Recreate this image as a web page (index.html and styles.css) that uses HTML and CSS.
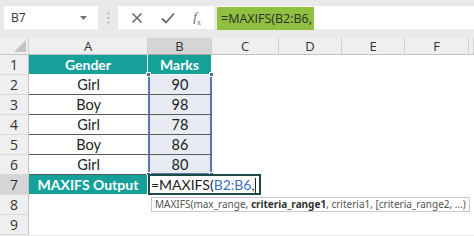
FILE: index.html
```html
<!DOCTYPE html>
<html lang="en">
<head>
    <meta charset="UTF-8">
    <title>MAXIFS</title>
    <link rel="stylesheet" href="styles.css">
</head>
<body>
    <div class="toolbar">
        <div class="name-box">
            <span>B7</span>
            <svg class="caret" width="7" height="4" viewBox="0 0 7 4"><path d="M0 0h7L3.5 4z" fill="#707070"/></svg>
        </div>
        <div class="grip">
            <svg width="3" height="12" viewBox="0 0 3 12"><circle cx="1.5" cy="1.5" r="1" fill="#a8a8a8"/><circle cx="1.5" cy="6" r="1" fill="#a8a8a8"/><circle cx="1.5" cy="10.5" r="1" fill="#a8a8a8"/></svg>
        </div>
        <div class="fx-buttons">
            <svg width="12" height="12" viewBox="0 0 12 12"><path d="M1.5 1.5l9 9M10.5 1.5l-9 9" stroke="#6a6a6a" stroke-width="1.6"/></svg>
            <svg width="14" height="12" viewBox="0 0 14 12"><path d="M1 6.5l4 4L13 1.5" stroke="#6a6a6a" stroke-width="1.8" fill="none"/></svg>
            <span class="fx"><i>f</i><sub>x</sub></span>
        </div>
        <div class="formula">
            <span class="formula-text">=MAXIFS(B2:B6,</span>
        </div>
    </div>

    <div class="sheet">
        <div class="corner"><span class="tri"></span></div>
        <div class="col-head">A</div>
        <div class="col-head active">B</div>
        <div class="col-head">C</div>
        <div class="col-head">D</div>
        <div class="col-head">E</div>
        <div class="col-head">F</div>
        <div class="col-head"></div>

        <div class="row-head">1</div>
        <div class="cell title">Gender</div>
        <div class="cell title">Marks</div>
        <div class="blank"></div>

        <div class="row-head">2</div>
        <div class="cell">Girl</div>
        <div class="cell sel first">90<span class="handle tl"></span><span class="handle tr"></span></div>
        <div class="blank"></div>

        <div class="row-head">3</div>
        <div class="cell">Boy</div>
        <div class="cell sel">98</div>
        <div class="blank"></div>

        <div class="row-head">4</div>
        <div class="cell">Girl</div>
        <div class="cell sel">78</div>
        <div class="blank"></div>

        <div class="row-head">5</div>
        <div class="cell">Boy</div>
        <div class="cell sel">86</div>
        <div class="blank"></div>

        <div class="row-head">6</div>
        <div class="cell">Girl</div>
        <div class="cell sel last">80<span class="handle bl"></span><span class="handle br"></span></div>
        <div class="blank"></div>

        <div class="row-head active">7</div>
        <div class="cell title">MAXIFS Output</div>
        <div class="cell edit-host">
            <div class="editor">=MAXIFS(<span class="ref">B2:B6</span>,<span class="cursor"></span></div>
            <div class="tip">MAXIFS(max_range, <b>criteria_range1</b>, criteria1, [criteria_range2, ...)</div>
        </div>
        <div class="blank"></div>

        <div class="row-head">8</div>
        <div class="blank wide"></div>

        <div class="row-head">9</div>
        <div class="blank wide"></div>
    </div>
</body>
</html>
```

FILE: styles.css
```css
* {
    margin: 0;
    padding: 0;
    box-sizing: border-box;
}

body {
    width: 474px;
    height: 236px;
    overflow: hidden;
    background: #e9e9e9;
    font-family: "Open Sans", "Noto Sans", sans-serif;
    color: #222;
}

.toolbar {
    display: flex;
    align-items: center;
    height: 38px;
    padding: 0 0 3px 4px;
}

.name-box {
    display: flex;
    align-items: center;
    justify-content: space-between;
    width: 94px;
    height: 23px;
    background: #fff;
    padding: 0 11px 0 7px;
    font-size: 12px;
    color: #333;
}

.grip {
    width: 20px;
    display: flex;
    justify-content: center;
}

.fx-buttons {
    display: flex;
    align-items: center;
    justify-content: space-around;
    width: 96px;
    height: 23px;
    background: #fff;
    padding: 0 4px;
}

.fx {
    font-family: "Liberation Serif", serif;
    font-size: 13px;
    color: #6a6a6a;
}

.fx sub {
    font-size: 8px;
}

.formula {
    flex: 1;
    height: 23px;
    margin-left: 3px;
    background: #fff;
}

.formula-text {
    display: inline-block;
    height: 23px;
    line-height: 23px;
    width: 97px;
    padding-left: 4px;
    background: #8fc03f;
    font-size: 12.5px;
    color: #2d2d2d;
}

.sheet {
    display: grid;
    grid-template-columns: 29px 119px 64px 67px 63px 63px 64px 5px;
    grid-template-rows: 17px repeat(9, 20px);
    background: #fff;
}

.corner,
.col-head {
    background: #efefef;
    border-right: 1px solid #d0d0d0;
    border-bottom: 1px solid #c4c4c4;
    font-size: 13px;
    line-height: 16px;
    text-align: center;
    color: #333;
}

.corner {
    position: relative;
}

.tri {
    position: absolute;
    right: 2px;
    bottom: 2px;
    border-left: 12px solid transparent;
    border-bottom: 12px solid #c4c4c4;
}

.col-head.active {
    background: #d5d5d5;
    border-bottom-color: #a8a8a8;
}

.row-head {
    background: #efefef;
    border-right: 1px solid #c4c4c4;
    border-bottom: 1px solid #dadada;
    font-size: 14px;
    line-height: 19px;
    text-align: center;
    color: #333;
}

.row-head.active {
    background: #d5d5d5;
}

.cell {
    position: relative;
    border-bottom: 1px solid #5a5a5a;
    font-family: Lato, "Open Sans", sans-serif;
    font-size: 14.5px;
    line-height: 19px;
    text-align: center;
    color: #222;
}

.cell.title {
    background: #15a09a;
    color: #fff;
    font-weight: bold;
    font-size: 14px;
    border-bottom-color: #fff;
    border-right: 1px solid #fff;
}

.cell.sel {
    background: #e8ebf4;
    border-left: 2px solid #5a78b0;
    border-right: 2px solid #5a78b0;
}

.cell.last {
    border-bottom: 2px solid #5a78b0;
}

.handle {
    position: absolute;
    width: 5px;
    height: 5px;
    background: #4a6aa8;
    border: 1px solid #fff;
}

.handle.tl { left: -4px; top: -3px; }
.handle.tr { right: -4px; top: -3px; }
.handle.bl { left: -4px; bottom: -4px; }
.handle.br { right: -4px; bottom: -4px; }

.blank {
    grid-column: span 5;
}

.blank.wide {
    grid-column: span 7;
}

.edit-host {
    border-bottom: none;
}

.editor {
    position: absolute;
    left: 0;
    top: -1px;
    width: 113px;
    height: 21px;
    border: 2px solid #1c4a47;
    background: #fff;
    font-size: 14px;
    line-height: 17px;
    text-align: left;
    padding-left: 1px;
    white-space: nowrap;
    overflow: hidden;
    color: #222;
}

.ref {
    color: #3a6fc0;
}

.cursor {
    display: inline-block;
    width: 1px;
    height: 15px;
    background: #222;
    vertical-align: -3px;
}

.tip {
    position: absolute;
    left: 3px;
    top: 22px;
    height: 15px;
    padding: 0 3px;
    border: 1px solid #c8c8c8;
    background: #fff;
    font-family: "Noto Sans", sans-serif;
    font-size: 10px;
    line-height: 13px;
    color: #555;
    white-space: nowrap;
    text-align: left;
}

.tip b {
    color: #333;
}
```
